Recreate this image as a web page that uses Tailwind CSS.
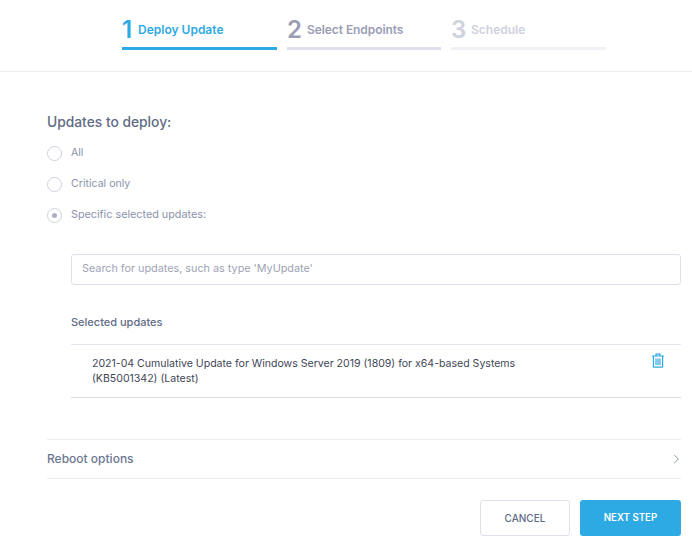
<!DOCTYPE html>
<html>
<head>
<meta charset="utf-8">
<script src="https://cdn.jsdelivr.net/npm/@tailwindcss/browser@4"></script>
</head>
<body class="bg-white">
<div class="w-[692px] h-[540px] overflow-hidden font-['Inter','Liberation_Sans',sans-serif] flex flex-col">
  <header class="h-[72px] border-b border-[#ebebf0] pl-[122px] flex gap-[10px] shrink-0">
    <div class="w-[155px] pt-[13px]">
      <div class="h-[34px] flex items-center gap-[9px] text-[#2daae4]"><span class="text-[24px] font-semibold w-[7px] leading-none">1</span><span class="text-[12px] font-semibold">Deploy Update</span></div>
      <div class="h-[3px] bg-[#2daae4]"></div>
    </div>
    <div class="w-[154px] pt-[13px]">
      <div class="h-[34px] flex items-center gap-[7px] text-[#9a9db5]"><span class="text-[24px] font-semibold leading-none w-[13px]">2</span><span class="text-[12px] font-semibold tracking-[-0.07px]">Select Endpoints</span></div>
      <div class="h-[3px] bg-[#dfe0eb]"></div>
    </div>
    <div class="w-[155px] pt-[13px]">
      <div class="h-[34px] flex items-center gap-[7px] text-[#cfd1de]"><span class="text-[24px] font-semibold leading-none w-[13px]">3</span><span class="text-[12px] font-semibold">Schedule</span></div>
      <div class="h-[3px] bg-[#f0f0f5]"></div>
    </div>
  </header>

  <main class="pl-[47px] pr-[11px] flex flex-col">
    <h2 class="mt-[40px] text-[13.8px] leading-[20px] font-medium text-[#5f6b85]">Updates to deploy:</h2>
    <div class="mt-[13px] flex flex-col gap-[15px]">
      <label class="h-[16px] flex items-center gap-[9px] text-[10.6px] text-[#8a93ab]"><span class="w-[15px] h-[15px] rounded-full border border-[#cdd0df]"></span>All</label>
      <label class="h-[16px] flex items-center gap-[9px] text-[10.6px] text-[#8a93ab]"><span class="w-[15px] h-[15px] rounded-full border border-[#cdd0df]"></span>Critical only</label>
      <label class="h-[16px] flex items-center gap-[9px] text-[10.8px] text-[#8a93ab]"><span class="w-[15px] h-[15px] rounded-full border border-[#cdd0df] flex items-center justify-center"><span class="w-[5px] h-[5px] rounded-full bg-[#a9aec4]"></span></span>Specific selected updates:</label>
    </div>

    <div class="ml-[24px]">
      <div class="mt-[31px] h-[31px] border border-[#dfe1ea] rounded-[3px] flex items-center pl-[10px] text-[10.8px] text-[#9ea3b5]">Search for updates, such as type 'MyUpdate'</div>
      <h3 class="mt-[29px] text-[11px] leading-[16px] font-medium text-[#5f6b85]">Selected updates</h3>
      <div class="mt-[14px] h-[54px] border-y border-y-[#e6e6ee] border-b-[#dcdde3] flex justify-between pl-[21px] pr-[16px]">
        <p class="w-[440px] pt-[11px] text-[10.55px] leading-[15px] text-[#3f4658]">2021-04 Cumulative Update for Windows Server 2019 (1809) for x64-based Systems (KB5001342) (Latest)</p>
        <svg class="mt-[8px]" width="14" height="15" viewBox="0 0 14 15" fill="none" stroke="#2daae4" stroke-width="1.2"><path d="M1 3h12M5 3V1.2h4V3"/><path d="M2.4 3v10.6c0 .3.2.5.5.5h8.2c.3 0 .5-.2.5-.5V3"/><path d="M5 5.5v6.5M7 5.5v6.5M9 5.5v6.5"/></svg>
      </div>
    </div>

    <div class="mt-[41px] h-[40px] border-y border-[#ebebf2] flex items-center justify-between pr-[1px]">
      <span class="text-[12px] font-medium text-[#6b7690]">Reboot options</span>
      <svg width="7" height="10" viewBox="0 0 7 10" fill="none" stroke="#8a93ab" stroke-width="1"><path d="M1.2 1l4.2 4-4.2 4"/></svg>
    </div>

    <div class="mt-[21px] flex justify-end gap-[10px]">
      <button class="w-[90px] h-[36px] border border-[#dfe1ea] rounded-[3px] bg-white text-[10px] font-medium text-[#5f6b85]">CANCEL</button>
      <button class="w-[101px] h-[36px] rounded-[3px] bg-[#2daae4] text-[9.7px] font-semibold text-white">NEXT STEP</button>
    </div>
  </main>
</div>
</body>
</html>
